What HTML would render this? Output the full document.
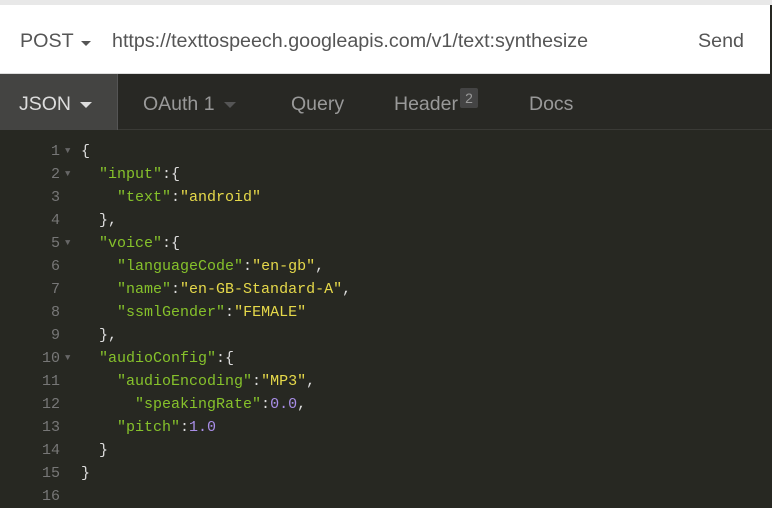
<!DOCTYPE html>
<html><head><meta charset="utf-8"><style>
html,body{margin:0;padding:0;width:772px;height:506px;overflow:hidden;background:#272822;font-family:"Liberation Sans",sans-serif}
#top{position:absolute;left:0;top:0;width:772px;height:5px;background:#e8e8e8}
#url{position:absolute;left:0;top:5px;width:770px;height:68px;background:#fff;border-bottom:1px solid #ddd;color:#555;font-size:19.7px}
#url span{position:absolute;top:25px}
.tri{display:inline-block;width:0;height:0;border-left:5px solid transparent;border-right:5px solid transparent;border-top:5px solid currentColor;vertical-align:middle}
#tabs{position:absolute;left:0;top:74px;width:772px;height:56px;background:#282824;color:#999;font-size:19.5px}
#tabs .t{position:absolute;top:19px}
#jt{position:absolute;left:0;top:0;width:117px;height:56px;background:#444442;border-right:1px solid #555}
#tabline{position:absolute;left:118px;top:55px;width:654px;height:1px;background:#3a3a36}
#code{position:absolute;left:0;top:140px;font-family:"Liberation Mono",monospace;font-size:15px;line-height:23px;color:#ddd}
.ln{position:absolute;left:0;width:60px;text-align:right;color:#777}
.fd{position:absolute;left:65px;color:#666;font-size:9px}
.cl{position:absolute;left:81px;white-space:pre}
.k{color:#86c22b}.s{color:#e6d94a}.n{color:#a98ee8}.p{color:#ddd}
</style></head><body>
<div id="top"></div>
<div id="url">
<span style="left:20px">POST</span>
<span style="left:81px;top:27px;color:#555"><i class="tri"></i></span>
<span style="left:112px">https://texttospeech.googleapis.com/v1/text:synthesize</span>
<span style="left:698px">Send</span>
</div>
<div id="tabs">
<div id="jt"></div>
<div id="tabline"></div>
<span class="t" style="left:19px;color:#ddd">JSON <i class="tri" style="margin-left:4px;border-left-width:6px;border-right-width:6px;border-top-width:6px"></i></span>
<span class="t" style="left:143px">OAuth 1 <i class="tri" style="margin-left:4px;color:#555;border-left-width:6px;border-right-width:6px;border-top-width:6px"></i></span>
<span class="t" style="left:291px">Query</span>
<span class="t" style="left:394px">Header</span>
<span style="position:absolute;left:460px;top:14px;width:18px;height:20px;background:#444;color:#999;font-size:14px;text-align:center;line-height:20px;border-radius:2px">2</span>
<span class="t" style="left:529px">Docs</span>
</div>
<div id="code">
<div class="ln" style="top:0">1</div><div class="fd" style="top:0">▼</div><div class="cl" style="top:0">{</div>
<div class="ln" style="top:23px">2</div><div class="fd" style="top:23px">▼</div><div class="cl" style="top:23px">  <span class="k">"input"</span>:{</div>
<div class="ln" style="top:46px">3</div><div class="cl" style="top:46px">    <span class="k">"text"</span>:<span class="s">"android"</span></div>
<div class="ln" style="top:69px">4</div><div class="cl" style="top:69px">  },</div>
<div class="ln" style="top:92px">5</div><div class="fd" style="top:92px">▼</div><div class="cl" style="top:92px">  <span class="k">"voice"</span>:{</div>
<div class="ln" style="top:115px">6</div><div class="cl" style="top:115px">    <span class="k">"languageCode"</span>:<span class="s">"en-gb"</span>,</div>
<div class="ln" style="top:138px">7</div><div class="cl" style="top:138px">    <span class="k">"name"</span>:<span class="s">"en-GB-Standard-A"</span>,</div>
<div class="ln" style="top:161px">8</div><div class="cl" style="top:161px">    <span class="k">"ssmlGender"</span>:<span class="s">"FEMALE"</span></div>
<div class="ln" style="top:184px">9</div><div class="cl" style="top:184px">  },</div>
<div class="ln" style="top:207px">10</div><div class="fd" style="top:207px">▼</div><div class="cl" style="top:207px">  <span class="k">"audioConfig"</span>:{</div>
<div class="ln" style="top:230px">11</div><div class="cl" style="top:230px">    <span class="k">"audioEncoding"</span>:<span class="s">"MP3"</span>,</div>
<div class="ln" style="top:253px">12</div><div class="cl" style="top:253px">      <span class="k">"speakingRate"</span>:<span class="n">0.0</span>,</div>
<div class="ln" style="top:276px">13</div><div class="cl" style="top:276px">    <span class="k">"pitch"</span>:<span class="n">1.0</span></div>
<div class="ln" style="top:299px">14</div><div class="cl" style="top:299px">  }</div>
<div class="ln" style="top:322px">15</div><div class="cl" style="top:322px">}</div>
<div class="ln" style="top:345px">16</div>
</div>
</body></html>
